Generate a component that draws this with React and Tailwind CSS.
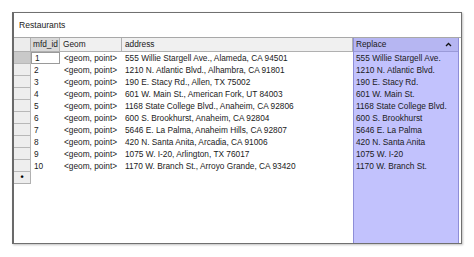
import React from "react";

const rows = [
  ["1", "555 Willie Stargell Ave., Alameda, CA 94501", "555 Willie Stargell Ave."],
  ["2", "1210 N. Atlantic Blvd., Alhambra, CA 91801", "1210 N. Atlantic Blvd."],
  ["3", "190 E. Stacy Rd., Allen, TX 75002", "190 E. Stacy Rd."],
  ["4", "601 W. Main St., American Fork, UT 84003", "601 W. Main St."],
  ["5", "1168 State College Blvd., Anaheim, CA 92806", "1168 State College Blvd."],
  ["6", "600 S. Brookhurst, Anaheim, CA 92804", "600 S. Brookhurst"],
  ["7", "5646 E. La Palma, Anaheim Hills, CA 92807", "5646 E. La Palma"],
  ["8", "420 N. Santa Anita, Arcadia, CA 91006", "420 N. Santa Anita"],
  ["9", "1075 W. I-20, Arlington, TX 76017", "1075 W. I-20"],
  ["10", "1170 W. Branch St., Arroyo Grande, CA 93420", "1170 W. Branch St."],
];

const font = "font-['Liberation_Sans',Arial,sans-serif]";

export default function App() {
  return (
    <div className={`w-[474px] h-[257px] bg-white pt-[12px] pl-[12px] ${font} text-[8.3px] text-[#1a1a1a]`}>
      <div className="w-[450px] h-[232px] border border-[#707070] border-l-2 border-l-[#6a6a6a] shadow-[1px_1px_2px_rgba(0,0,0,0.25)] flex flex-col bg-white">
        <div className="h-[24px] flex items-center pl-[5px] text-[8.6px] text-[#222]">Restaurants</div>
        <div className="flex-1 flex border-t border-[#a8a8a8] pr-[2px]">
          {/* row header column */}
          <div className="w-[17px] flex flex-col">
            <div className="h-[14px] bg-[#ececec] border-r border-b border-[#b0b0b0]"></div>
            {rows.map((r, i) => (
              <div
                key={i}
                className={`h-[12px] border-r border-b border-[#b8b8b8] ${i === 0 ? "bg-[#c9c9c9]" : "bg-[#eeeeee]"}`}
              ></div>
            ))}
            <div className="h-[12px] bg-[#eeeeee] border-r border-b border-[#b0b0b0] flex items-center justify-center text-[9px] font-bold leading-none text-black">
              •
            </div>
          </div>
          {/* mfd_id */}
          <div className="w-[29px] flex flex-col">
            <div className="h-[14px] bg-[#d9d9d9] border-r border-b border-[#b0b0b0] flex items-center pl-[2px]">mfd_id</div>
            {rows.map((r, i) => (
              <div
                key={i}
                className={`h-[12px] flex items-center pl-[3px] ${i === 0 ? "border border-[#9a9a9a] bg-white" : ""}`}
              >
                {r[0]}
              </div>
            ))}
          </div>
          {/* Geom */}
          <div className="w-[62px] flex flex-col">
            <div className="h-[14px] bg-[#f0f0f0] border-r border-b border-[#b0b0b0] flex items-center pl-[3px]">Geom</div>
            {rows.map((r, i) => (
              <div key={i} className="h-[12px] flex items-center pl-[4px] whitespace-nowrap">
                {"<geom, point>"}
              </div>
            ))}
          </div>
          {/* address */}
          <div className="w-[231px] flex flex-col">
            <div className="h-[14px] bg-[#f0f0f0] border-r border-b border-[#b0b0b0] flex items-center pl-[3px]">address</div>
            {rows.map((r, i) => (
              <div key={i} className="h-[12px] flex items-center pl-[3px] whitespace-nowrap">
                {r[1]}
              </div>
            ))}
          </div>
          {/* Replace */}
          <div className="w-[106px] flex flex-col bg-[#c2c2fd] border-l border-r border-[#8e8ed8]">
            <div className="h-[14px] bg-[#b6b6f2] border-b border-[#9a9ad8] flex items-center pl-[2px] pr-[6px] justify-between">
              <span>Replace</span>
              <svg width="7" height="5" viewBox="0 0 7 5">
                <path d="M1 4 L3.5 1.5 L6 4" fill="none" stroke="#111" strokeWidth="1.3" />
              </svg>
            </div>
            {rows.map((r, i) => (
              <div key={i} className="h-[12px] flex items-center pl-[2px] whitespace-nowrap">
                {r[2]}
              </div>
            ))}
            <div className="flex-1"></div>
          </div>
        </div>
      </div>
    </div>
  );
}
